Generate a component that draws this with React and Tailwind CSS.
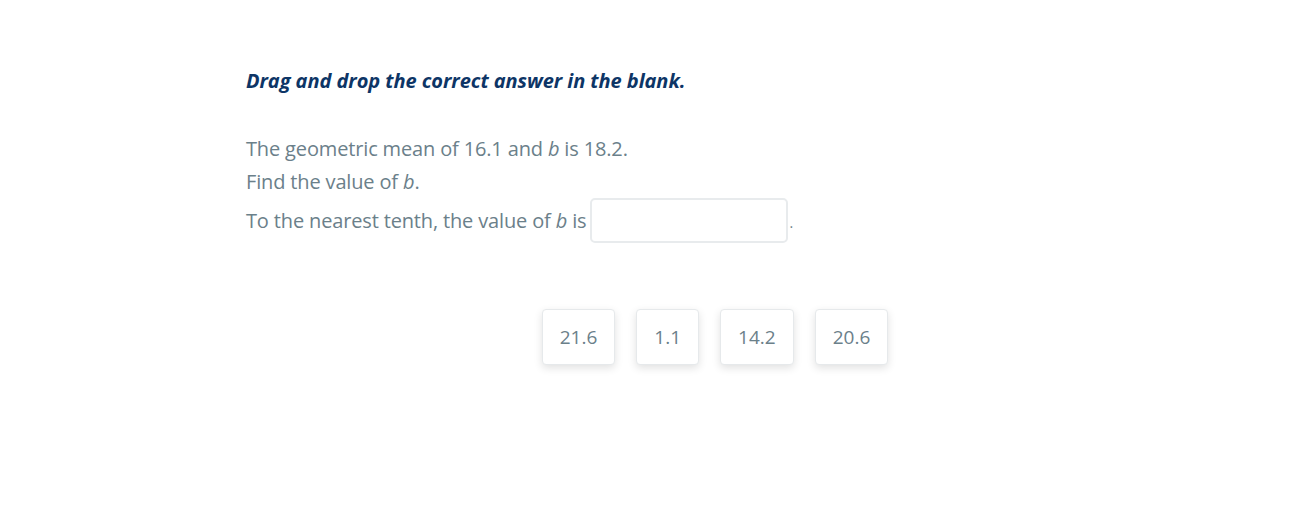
const choices = ['21.6', '1.1', '14.2', '20.6'];

const Tile = ({ value }) => (
  <div className="h-[56px] px-[17px] min-w-[61px] flex items-center justify-center bg-white border border-[#e6e9eb] rounded-[4px] shadow-[0_3px_8px_rgba(0,0,0,0.12)] text-[19px] text-[#6b808a]">
    {value}
  </div>
);

const App = () => {
  return (
    <div className="min-h-[506px] bg-white pt-[66px] pl-[246px] pr-[126px] font-['Open_Sans',sans-serif]">
      <h1 className="text-[20px] leading-[30px] font-bold italic text-[#0d3566] tracking-[-0.05px]">
        Drag and drop the correct answer in the blank.
      </h1>

      <div className="mt-[36px] text-[20px] text-[#6b808a] tracking-[-0.15px]">
        <p className="leading-[33px]">
          The geometric mean of 16.1 and <i>b</i> is 18.2.
        </p>
        <p className="leading-[33px]">
          Find the value of <i>b</i>.
        </p>
        <p className="flex items-center">
          To the nearest tenth, the value of&nbsp;<i>b</i>&nbsp;is
          <span className="ml-[4px] inline-block w-[198px] h-[45px] border-2 border-[#e8ebed] rounded-[5px]"></span>
          <span className="ml-[1px] self-end mb-[10px] text-[14px]">.</span>
        </p>
      </div>

      <div className="mt-[66px] flex justify-center gap-[21px]">
        {choices.map((c) => (
          <Tile key={c} value={c} />
        ))}
      </div>
    </div>
  );
};

export default App;
